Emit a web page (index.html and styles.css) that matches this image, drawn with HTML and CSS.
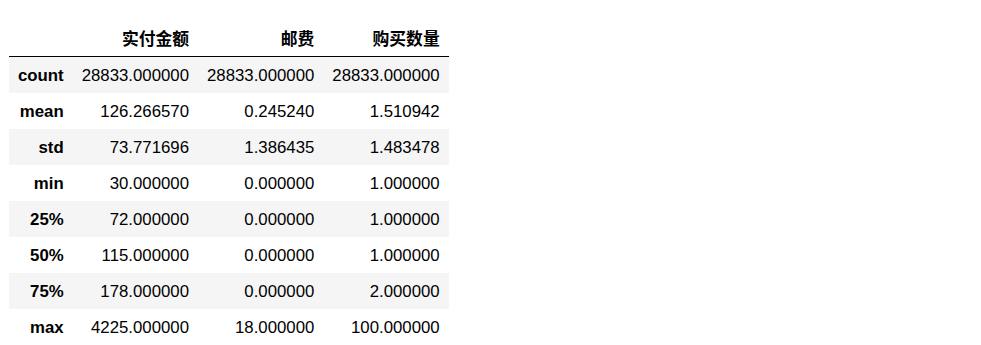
FILE: index.html
```html
<!DOCTYPE html>
<html lang="zh">
<head>
<meta charset="utf-8">
<title>describe</title>
<link rel="stylesheet" href="styles.css">
</head>
<body>
<div class="output">
<table class="dataframe">
  <thead>
    <tr><th></th><th>实付金额</th><th>邮费</th><th>购买数量</th></tr>
  </thead>
  <tbody>
    <tr><th>count</th><td>28833.000000</td><td>28833.000000</td><td>28833.000000</td></tr>
    <tr><th>mean</th><td>126.266570</td><td>0.245240</td><td>1.510942</td></tr>
    <tr><th>std</th><td>73.771696</td><td>1.386435</td><td>1.483478</td></tr>
    <tr><th>min</th><td>30.000000</td><td>0.000000</td><td>1.000000</td></tr>
    <tr><th>25%</th><td>72.000000</td><td>0.000000</td><td>1.000000</td></tr>
    <tr><th>50%</th><td>115.000000</td><td>0.000000</td><td>1.000000</td></tr>
    <tr><th>75%</th><td>178.000000</td><td>0.000000</td><td>2.000000</td></tr>
    <tr><th>max</th><td>4225.000000</td><td>18.000000</td><td>100.000000</td></tr>
  </tbody>
</table>
</div>
</body>
</html>
```
FILE: styles.css
```css
html, body {
  margin: 0;
  padding: 0;
  background: #ffffff;
}
.output {
  padding: 21px 0 0 9px;
}
.dataframe {
  border-collapse: collapse;
  border-spacing: 0;
  font-family: "Liberation Sans", Arial, "Noto Sans CJK SC", sans-serif;
  font-size: 16.8px;
  color: #000;
}
.dataframe th,
.dataframe td {
  text-align: right;
  vertical-align: middle;
  padding: 0 9px;
  height: 36px;
  line-height: 19px;
  white-space: nowrap;
  border: none;
}
.dataframe th {
  font-weight: bold;
}
.dataframe thead th {
  font-family: "Noto Sans CJK SC", sans-serif;
  border-bottom: 1px solid #000;
  height: 35px;
}
.dataframe tbody tr:nth-child(odd) {
  background: #f5f5f5;
}
```
